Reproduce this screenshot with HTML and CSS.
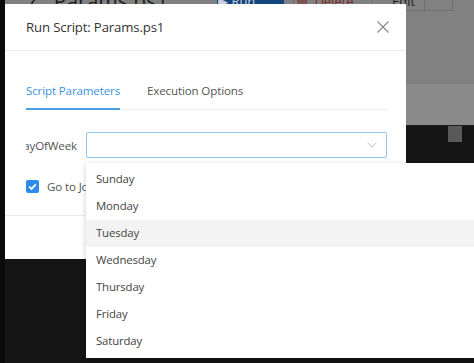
FILE: index.html
```html
<!DOCTYPE html>
<html lang="en">
<head>
  <meta charset="UTF-8" />
  <meta name="viewport" content="width=device-width, initial-scale=1.0"/>
  <title>Run Script: Params.ps1</title>
  <link rel="stylesheet" href="styles.css">
</head>
<body>
  <div class="page">
    <div class="sidebar"></div>
    <div class="main">
      <div class="toolbar">
        <div class="crumb"><span class="back">&lsaquo;</span> Params.ps1</div>
        <div class="actions">
          <span class="btn btn-run">&#9654; Run</span>
          <span class="btn btn-delete">&#128465; Delete</span>
          <span class="btn btn-edit">Edit</span>
          <span class="btn btn-more"></span>
        </div>
      </div>
      <div class="band"></div>
      <div class="table">
        <div class="cell"></div>
      </div>
    </div>
  </div>

  <div class="modal">
    <div class="modal-header">
      <span class="modal-title">Run Script: Params.ps1</span>
      <svg class="close" width="12" height="12" viewBox="0 0 12 12">
        <path d="M0.5 0.5 L11.5 11.5 M11.5 0.5 L0.5 11.5" stroke="#8a8a8a" stroke-width="1.2" fill="none"/>
      </svg>
    </div>
    <div class="modal-body">
      <div class="tabs">
        <span class="tab active">Script Parameters</span>
        <span class="tab">Execution Options</span>
      </div>
      <div class="form-row">
        <label class="form-label"><span>DayOfWeek</span></label>
        <div class="select">
          <svg width="10" height="6" viewBox="0 0 10 6">
            <polyline points="0.5,0.5 5,5.3 9.5,0.5" stroke="#c2c2c2" stroke-width="1" fill="none"/>
          </svg>
        </div>
      </div>
      <div class="check-row">
        <span class="checkbox">
          <svg width="13" height="13" viewBox="0 0 13 13">
            <polyline points="3.2,6.6 5.5,8.9 9.8,4.3" stroke="#fff" stroke-width="1.8" fill="none"/>
          </svg>
        </span>
        <span>Go to Job Details after running</span>
      </div>
    </div>
    <div class="modal-footer">
      <span class="btn-cancel">Cancel</span>
      <span class="btn-ok">Run</span>
    </div>
  </div>

  <ul class="dropdown">
    <li>Sunday</li>
    <li>Monday</li>
    <li class="hover">Tuesday</li>
    <li>Wednesday</li>
    <li>Thursday</li>
    <li>Friday</li>
    <li>Saturday</li>
  </ul>
</body>
</html>
```

FILE: styles.css
```css
html, body {
  margin: 0;
  height: 100%;
  overflow: hidden;
}
body {
  font-family: "Open Sans", "Noto Sans", sans-serif;
  background: #121212;
  color: #444;
}
.page {
  display: flex;
  height: 100%;
}
.sidebar {
  width: 5px;
  background: #0a0a0a;
}
.main {
  flex: 1;
  display: flex;
  flex-direction: column;
}
.toolbar {
  height: 84px;
  background: #818181;
  display: flex;
  align-items: flex-start;
  justify-content: space-between;
}
.crumb {
  margin: -13px 0 0 25px;
  font-size: 21px;
  color: #1e1e1e;
}
.back {
  margin-right: 12px;
}
.actions {
  display: flex;
  align-items: flex-start;
  margin-right: 21px;
}
.btn {
  display: block;
  height: 11px;
  font-size: 13px;
  line-height: 2px;
  overflow: hidden;
  box-sizing: border-box;
  border: 1px solid #707070;
  border-top: none;
  color: #222;
}
.btn-run {
  width: 67px;
  background: #12467c;
  border-color: #12467c;
  color: #ccd;
  margin-right: 9px;
}
.btn-delete {
  width: 79px;
  color: #7a2a2a;
}
.btn-edit {
  width: 53px;
  border-left: none;
  padding-left: 20px;
}
.btn-more {
  width: 28px;
  border-left: none;
}
.band {
  height: 41px;
  background: #8a8a8a;
}
.table {
  flex: 1;
  background: #141414;
  border-top: 1px solid #1c1c1c;
}
.cell {
  margin-left: 443px;
  width: 14px;
  height: 16px;
  background: #595959;
}

/* modal */
.modal {
  position: absolute;
  left: 5px;
  top: 4px;
  width: 401px;
  height: 255px;
  background: #fff;
  display: flex;
  flex-direction: column;
}
.modal-header {
  height: 47px;
  border-bottom: 1px solid #ebebeb;
  display: flex;
  align-items: center;
  justify-content: space-between;
  padding: 0 17px 0 21px;
  box-sizing: border-box;
}
.modal-title {
  font-size: 13.2px;
  letter-spacing: -0.15px;
  color: #333;
}
.modal-body {
  padding: 22px 19px 19px 21px;
  font-size: 11.6px;
  letter-spacing: -0.15px;
}
.tabs {
  display: flex;
  gap: 27px;
  border-bottom: 1px solid #ececec;
}
.tab {
  padding: 9px 0 8px;
  line-height: 18px;
  color: #555;
}
.tab.active {
  color: #3b93dd;
  border-bottom: 2px solid #4a9fe3;
  margin-bottom: -1px;
}
.form-row {
  display: flex;
  align-items: center;
  margin-top: 22px;
}
.form-label {
  width: 51px;
  padding-right: 9px;
  display: flex;
  justify-content: flex-end;
  overflow: hidden;
  white-space: nowrap;
  color: #555;
}
.select {
  flex: 1;
  height: 26px;
  box-sizing: border-box;
  border: 1px solid #8fc6ee;
  border-radius: 2px;
  display: flex;
  align-items: center;
  justify-content: flex-end;
  padding-right: 9px;
}
.check-row {
  display: flex;
  align-items: center;
  gap: 8px;
  margin-top: 18px;
  height: 20px;
  color: #555;
  white-space: nowrap;
}
.checkbox {
  width: 13px;
  height: 13px;
  border-radius: 2px;
  background: #2f8ae8;
  display: flex;
}
.modal-footer {
  flex: 1;
  border-top: 1px solid #ebebeb;
  display: flex;
  align-items: center;
  justify-content: flex-end;
  gap: 8px;
  padding-right: 20px;
  font-size: 11.6px;
}
.btn-cancel, .btn-ok {
  padding: 5px 14px;
  border: 1px solid #ccc;
  border-radius: 2px;
}
.btn-ok {
  background: #2d8cf0;
  border-color: #2d8cf0;
  color: #fff;
}

/* dropdown */
.dropdown {
  position: absolute;
  left: 86px;
  top: 163px;
  width: 420px;
  margin: 0;
  padding: 3px 0 3px;
  list-style: none;
  background: #fff;
  box-shadow: 0 2px 6px rgba(0, 0, 0, 0.2);
}
.dropdown li {
  height: 27px;
  line-height: 26px;
  padding: 0 10px;
  font-size: 11.4px;
  letter-spacing: -0.15px;
  color: #444;
}
.dropdown li.hover {
  background: #f3f3f3;
}
```
